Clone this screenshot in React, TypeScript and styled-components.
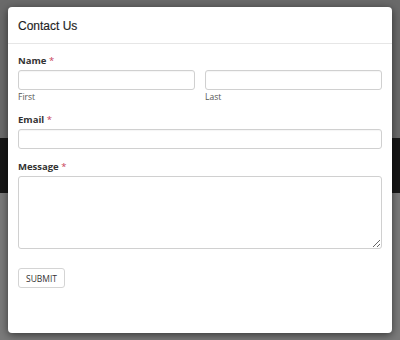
import React from "react";
import styled, { createGlobalStyle } from "styled-components";

const GlobalStyle = createGlobalStyle`
    html, body {
        margin: 0;
        padding: 0;
    }
    * {
        box-sizing: border-box;
    }
`;

const Page = styled.div`
    position: relative;
    width: 400px;
    height: 340px;
    overflow: hidden;
    background: #6c6c6c;
    display: flex;
    flex-direction: column;
`;

const PageTop = styled.div`
    height: 138px;
    background: #6a6a6a;
`;

const PageBand = styled.div`
    height: 55px;
    background: #161616;
`;

const PageRest = styled.div`
    flex: 1;
    background: #7a7a7a;
`;

const Modal = styled.div`
    position: absolute;
    top: 7px;
    left: 8px;
    width: 384px;
    height: 326px;
    background: #fff;
    border-radius: 4px;
    box-shadow: 0 2px 8px rgba(0, 0, 0, 0.55);
    display: flex;
    flex-direction: column;
`;

const ModalHeader = styled.div`
    height: 37px;
    padding: 0 10px;
    display: flex;
    align-items: center;
    border-bottom: 1px solid #e6e6e6;
`;

const Title = styled.h4`
    margin: 0;
    padding-top: 1px;
    font-family: "Liberation Sans", Arial, sans-serif;
    font-size: 12px;
    font-weight: normal;
    color: #1e1e1e;
    -webkit-text-stroke: 0.15px #1e1e1e;
`;

const ModalBody = styled.form`
    padding: 10px 10px;
    display: flex;
    flex-direction: column;
`;

const Field = styled.div<{ $gap?: number }>`
    margin-bottom: ${(p) => p.$gap ?? 0}px;
`;

const Label = styled.label`
    display: block;
    font-family: "Open Sans", "DejaVu Sans", sans-serif;
    font-size: 9.5px;
    font-weight: 700;
    line-height: 13px;
    color: #333;
    margin-bottom: 3px;

    span {
        color: #c8415a;
        font-weight: 400;
    }
`;

const NameRow = styled.div`
    display: grid;
    grid-template-columns: 1fr 1fr;
    gap: 10px;
`;

const Input = styled.input`
    display: block;
    width: 100%;
    height: 20px;
    margin: 0;
    border: 1px solid #d0d0d0;
    border-radius: 3px;
    background: #fff;
    box-shadow: inset 0 1px 1px rgba(0, 0, 0, 0.04);
`;

const TextArea = styled.textarea`
    display: block;
    width: 100%;
    height: 73px;
    margin: 0;
    border: 1px solid #d0d0d0;
    border-radius: 3px;
    background: #fff;
    resize: vertical;
`;

const SubLabel = styled.div`
    font-family: "Open Sans", "DejaVu Sans", sans-serif;
    font-size: 8.5px;
    line-height: 11px;
    color: #555;
    margin-top: 1px;
`;

const SubmitButton = styled.button`
    align-self: flex-start;
    height: 20px;
    padding: 0 7px;
    font-family: "Open Sans", "DejaVu Sans", sans-serif;
    font-size: 8.5px;
    color: #333;
    background: #fff;
    border: 1px solid #d4d4d4;
    border-radius: 3px;
`;

const App = () => {
    return <>
        <GlobalStyle />
        <Page>
            <PageTop />
            <PageBand />
            <PageRest />
            <Modal>
                <ModalHeader>
                    <Title>Contact Us</Title>
                </ModalHeader>
                <ModalBody onSubmit={(e) => e.preventDefault()}>
                    <Field $gap={11}>
                        <Label>Name <span>*</span></Label>
                        <NameRow>
                            <div>
                                <Input type="text" />
                                <SubLabel>First</SubLabel>
                            </div>
                            <div>
                                <Input type="text" />
                                <SubLabel>Last</SubLabel>
                            </div>
                        </NameRow>
                    </Field>
                    <Field $gap={11}>
                        <Label>Email <span>*</span></Label>
                        <Input type="email" />
                    </Field>
                    <Field $gap={19}>
                        <Label>Message <span>*</span></Label>
                        <TextArea />
                    </Field>
                    <SubmitButton type="submit">SUBMIT</SubmitButton>
                </ModalBody>
            </Modal>
        </Page>
    </>
}

export default App;
